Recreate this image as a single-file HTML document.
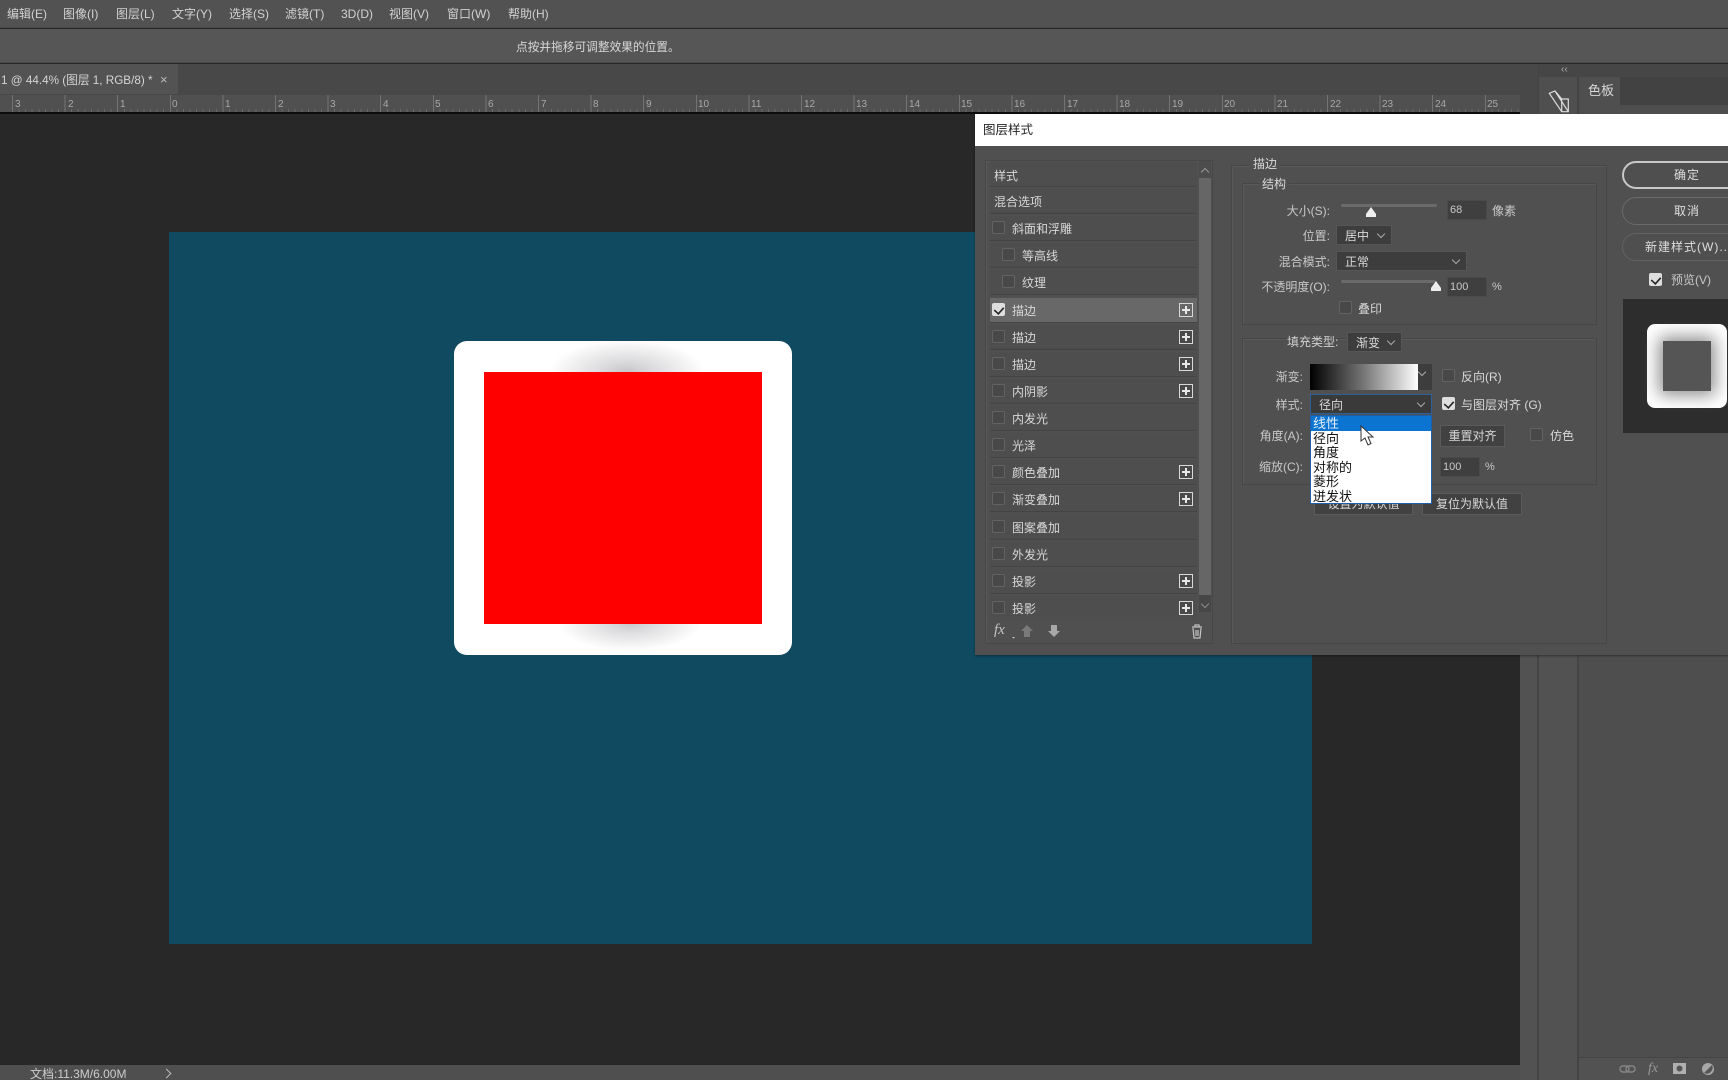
<!DOCTYPE html>
<html lang="zh"><head><meta charset="utf-8"><title>图层样式</title>
<style>
*{box-sizing:border-box}
html,body{margin:0;padding:0;width:1728px;height:1080px;overflow:hidden;background:#282828}
body{position:relative;font-family:"Liberation Sans","Noto Sans CJK SC",sans-serif;font-size:12px;color:#d8d8d8}
div,span.a{position:absolute}
.t{position:absolute;line-height:20px;height:20px;white-space:nowrap}
.r{text-align:right;width:90px;color:#c8c8c8}
.m{font-size:12px;top:4px;color:#d2d2d2}
.l{position:absolute;font-size:10px;color:#a8a8a8;top:98px;line-height:14px}
.row{left:990px;width:207px;height:26px;background:#4e4e4e;border-bottom:1px solid #444;border-top:1px solid #505050}
.row .t{top:3px;left:22px;color:#d8d8d8}
.row.i .t{left:32px}
.cb{width:13px;height:13px;background:#484848;border:1px solid #626262;border-radius:2px}
.row .cb{left:2px;top:5px}
.row.i .cb{left:12px}
.cb.c{background:#dedede;border-color:#dedede}
.cb.c:after{content:"";position:absolute;left:2px;top:0;width:6px;height:9px;border:solid #222;border-width:0 2px 2px 0;transform:rotate(42deg) scale(.8)}
.p{left:189px;top:5px;width:14px;height:14px;border:1px solid #d8d8d8;background:#4a4a4a}
.p:before{content:"";position:absolute;left:2px;top:5px;width:8px;height:2px;background:#e8e8e8}
.p:after{content:"";position:absolute;left:5px;top:2px;width:2px;height:8px;background:#e8e8e8}
.sel{background:#3d3d3d;border:1px solid #565656;color:#d8d8d8;height:20px;line-height:20px;padding-left:8px}
.sel:after{content:"";position:absolute;right:7px;top:5px;width:5px;height:5px;border:solid #aaa;border-width:0 1px 1px 0;transform:rotate(45deg)}
.inp{background:#3f3f3f;border:1px solid #4a4a4a;color:#c8c8c8;font-size:11px;line-height:19px;height:20px;padding-left:2px;width:40px}
.trk{height:3px;background:#6a6a6a;border-radius:2px}
.btn{background:#414141;border:1px solid #5a5a5a;color:#d8d8d8;text-align:center;height:22px;line-height:21px}
.pill{left:1622px;width:130px;height:28px;border-radius:14px;border:1px solid #6a6a6a;background:#4f4f4f;text-align:center;line-height:26px;color:#dedede;letter-spacing:1px}
.grp{border:1px solid #464646;box-shadow:inset 1px 1px 0 #595959}
.leg{background:#505050;padding:0 3px}
.it{left:1px;width:120px;height:14.6px;line-height:15px;font-size:13px;color:#111;padding-left:2px}
</style></head><body>

<!-- menu bar -->
<div style="left:0;top:0;width:1728px;height:28px;background:#525252;border-bottom:1px solid #484848"></div>
<span class="t m" style="left:7px">编辑(E)</span><span class="t m" style="left:63px">图像(I)</span><span class="t m" style="left:116px">图层(L)</span><span class="t m" style="left:172px">文字(Y)</span><span class="t m" style="left:229px">选择(S)</span><span class="t m" style="left:285px">滤镜(T)</span><span class="t m" style="left:341px">3D(D)</span><span class="t m" style="left:389px">视图(V)</span><span class="t m" style="left:447px">窗口(W)</span><span class="t m" style="left:508px">帮助(H)</span>

<!-- options bar -->
<div style="left:0;top:29px;width:1728px;height:34px;background:#565656;border-bottom:1px solid #4a4a4a"></div>
<span class="t" style="left:516px;top:38px;font-size:11.7px;color:#d8d8d8">点按并拖移可调整效果的位置。</span>

<!-- tab bar -->
<div style="left:0;top:64px;width:1538px;height:31px;background:#484848"></div>
<div style="left:0;top:64px;width:178px;height:30px;background:#535353"></div>
<span class="t" style="left:1px;top:71px;font-size:11.7px;color:#d4d4d4">1 @ 44.4% (图层 1, RGB/8) *</span>
<span class="t" style="left:160px;top:70px;font-size:13px;color:#bcbcbc">×</span>

<!-- ruler -->
<div style="left:0;top:95px;width:1520px;height:17px;background-color:#505050;background-image:repeating-linear-gradient(90deg,#737373 0,#737373 1px,transparent 1px,transparent 52.6px),repeating-linear-gradient(90deg,#686868 0,#686868 1px,transparent 1px,transparent 6.575px);background-size:100% 17px,100% 3px;background-position:12.2px 0,12.2px 14px;background-repeat:no-repeat"></div>
<div style="left:0;top:112px;width:1520px;height:2px;background:#0c0c0c"></div>
<span class="l" style="left:15px">3</span><span class="l" style="left:68px">2</span><span class="l" style="left:120px">1</span><span class="l" style="left:172px">0</span><span class="l" style="left:225px">1</span><span class="l" style="left:278px">2</span><span class="l" style="left:330px">3</span><span class="l" style="left:383px">4</span><span class="l" style="left:435px">5</span><span class="l" style="left:488px">6</span><span class="l" style="left:541px">7</span><span class="l" style="left:593px">8</span><span class="l" style="left:646px">9</span><span class="l" style="left:698px">10</span><span class="l" style="left:751px">11</span><span class="l" style="left:804px">12</span><span class="l" style="left:856px">13</span><span class="l" style="left:909px">14</span><span class="l" style="left:961px">15</span><span class="l" style="left:1014px">16</span><span class="l" style="left:1067px">17</span><span class="l" style="left:1119px">18</span><span class="l" style="left:1172px">19</span><span class="l" style="left:1224px">20</span><span class="l" style="left:1277px">21</span><span class="l" style="left:1330px">22</span><span class="l" style="left:1382px">23</span><span class="l" style="left:1435px">24</span><span class="l" style="left:1487px">25</span>

<!-- document -->
<div style="left:169px;top:232px;width:1143px;height:712px;background:#0f4a61"></div>
<div style="left:454px;top:341px;width:338px;height:314px;border-radius:13px;background:radial-gradient(ellipse 78px 32px at 173px 31px,#c6c6c8 0,#dcdcde 35%,rgba(255,255,255,0) 100%),radial-gradient(ellipse 72px 28px at 176px 282px,#c8c8ca 0,#dedee0 35%,rgba(255,255,255,0) 100%),#fff"></div>
<div style="left:484px;top:372px;width:278px;height:252px;background:#f00"></div>

<!-- right dock -->
<div style="left:1520px;top:64px;width:208px;height:1016px;background:#525252"></div>
<div style="left:1537px;top:64px;width:2px;height:1016px;background:#444"></div>
<div style="left:1577px;top:64px;width:2px;height:1016px;background:#444"></div>
<div style="left:1579px;top:64px;width:149px;height:1016px;background:#4e4e4e"></div>
<div style="left:1579px;top:1057px;width:149px;height:23px;background:#525252;border-top:1px solid #444"></div>
<div style="left:1520px;top:64px;width:18px;height:50px;background:#484848"></div>
<div style="left:1539px;top:64px;width:189px;height:13px;background:#464646"></div>
<span class="t" style="left:1561px;top:60px;font-size:10px;color:#b0b0b0">‹‹</span>
<div style="left:1539px;top:77px;width:38px;height:37px;background:#4f4f4f"></div>
<svg style="position:absolute;left:1546px;top:88px" width="28" height="26" viewBox="0 0 28 26"><path d="M3.3 5.3 L9 3 L15.7 11 L22.3 11 L22.3 23.7 L15.7 23.7 Z M9 3 L22.3 23.7 M15.7 11 L15.7 23.7" fill="none" stroke="#dcdcdc" stroke-width="1.2"/></svg>
<div style="left:1620px;top:77px;width:108px;height:28px;background:#424242"></div>
<div style="left:1582px;top:77px;width:38px;height:37px;background:#4f4f4f"></div>
<span class="t" style="left:1588px;top:81px;font-size:13px;color:#d8d8d8">色板</span>

<!-- footer icons -->
<svg style="position:absolute;left:1618px;top:1061px" width="105" height="16" viewBox="0 0 105 16">
<rect x="2" y="5" width="9" height="6" rx="3" fill="none" stroke="#868686" stroke-width="1.4"/><rect x="8" y="5" width="9" height="6" rx="3" fill="none" stroke="#868686" stroke-width="1.4"/>
<rect x="55" y="2" width="13" height="11" fill="#b0b0b0"/><circle cx="61.5" cy="7.5" r="3" fill="#555"/>
<circle cx="90" cy="8" r="6" fill="#a8a8a8"/><path d="M86 12 L94 4 A6 6 0 0 1 86 12Z" fill="#555"/></svg>
<span class="t" style="left:1648px;top:1059px;font-family:'Liberation Serif',serif;font-style:italic;font-size:14px;color:#989898">fx</span>

<!-- status bar -->
<div style="left:0;top:1065px;width:1520px;height:15px;background:#4f4f4f"></div>
<span class="t" style="left:30px;top:1064px;font-size:12px;color:#cccccc">文档:11.3M/6.00M</span>
<div style="left:163px;top:1070px;width:7px;height:7px;border:solid #bbb;border-width:1px 1px 0 0;transform:rotate(45deg)"></div>

<!-- dialog -->
<div style="left:975px;top:114px;width:753px;height:541px;background:#505050;box-shadow:0 1px 2px rgba(0,0,0,.4)"></div>
<div style="left:975px;top:114px;width:753px;height:32px;background:#fff"></div>
<span class="t" style="left:983px;top:120px;color:#222;font-size:12.5px">图层样式</span>

<!-- style list -->
<div class="grp" style="left:985px;top:160px;width:228px;height:484px;border-color:#474747"></div>
<div class="row" style="top:161px"><span class="t" style="left:4px;top:4px">样式</span></div>
<div class="row" style="top:188px"><span class="t" style="left:4px">混合选项</span></div>
<div class="row" style="top:215px"><div class="cb"></div><span class="t">斜面和浮雕</span></div>
<div class="row i" style="top:242px"><div class="cb"></div><span class="t">等高线</span></div>
<div class="row i" style="top:269px"><div class="cb"></div><span class="t">纹理</span></div>
<div class="row" style="top:297px;background:#686868"><div class="cb c"></div><span class="t">描边</span><div class="p" style="background:#686868"></div></div>
<div class="row" style="top:324px"><div class="cb"></div><span class="t">描边</span><div class="p"></div></div>
<div class="row" style="top:351px"><div class="cb"></div><span class="t">描边</span><div class="p"></div></div>
<div class="row" style="top:378px"><div class="cb"></div><span class="t">内阴影</span><div class="p"></div></div>
<div class="row" style="top:405px"><div class="cb"></div><span class="t">内发光</span></div>
<div class="row" style="top:432px"><div class="cb"></div><span class="t">光泽</span></div>
<div class="row" style="top:459px"><div class="cb"></div><span class="t">颜色叠加</span><div class="p"></div></div>
<div class="row" style="top:486px"><div class="cb"></div><span class="t">渐变叠加</span><div class="p"></div></div>
<div class="row" style="top:514px"><div class="cb"></div><span class="t">图案叠加</span></div>
<div class="row" style="top:541px"><div class="cb"></div><span class="t">外发光</span></div>
<div class="row" style="top:568px"><div class="cb"></div><span class="t">投影</span><div class="p"></div></div>
<div class="row" style="top:595px;height:24px;border-bottom:0"><div class="cb"></div><span class="t">投影</span><div class="p"></div></div>
<!-- scrollbar -->
<div style="left:1199px;top:161px;width:12px;height:434px;background:#666"></div>
<div style="left:1199px;top:161px;width:12px;height:17px;background:#4c4c4c"></div>
<div style="left:1202px;top:169px;width:6px;height:6px;border:solid #9a9a9a;border-width:1px 0 0 1px;transform:rotate(45deg)"></div>
<div style="left:1199px;top:595px;width:12px;height:17px;background:#474747"></div>
<div style="left:1202px;top:601px;width:6px;height:6px;border:solid #8a8a8a;border-width:0 1px 1px 0;transform:rotate(45deg)"></div>
<!-- list toolbar -->
<div style="left:987px;top:619px;width:224px;height:22px;background:#505050"></div>
<span class="t" style="left:994px;top:620px;font-family:'Liberation Serif',serif;font-style:italic;font-size:15px;color:#c4c4c4">fx</span>
<svg style="position:absolute;left:1006px;top:620px" width="200" height="22" viewBox="0 0 200 22">
<path d="M3 18 L9 18 L6 21Z" fill="#ccc" transform="translate(3,-1) scale(.5) translate(3,18)"/>
<path d="M21 6 L27 0 L33 6 L30 6 L30 12 L24 12 L24 6Z" transform="translate(-6,5)" fill="#7a7a7a"/>
<path d="M45 6 L45 0 L51 0 L51 6 L54 6 L48 12 L42 6Z" transform="translate(0,5)" fill="#a8a8a8"/>
<path d="M186 7 L196 7 M189 7 L189 5 L193 5 L193 7 M187 8 L188 18 L194 18 L195 8 M190 10 L190 16 M192 10 L192 16" fill="none" stroke="#c4c4c4" stroke-width="1.2"/>
</svg>

<!-- stroke group -->
<div class="grp" style="left:1231px;top:165px;width:376px;height:479px"></div>
<span class="t leg" style="left:1250px;top:154px">描边</span>
<div class="grp" style="left:1242px;top:183px;width:355px;height:142px"></div>
<span class="t leg" style="left:1259px;top:174px">结构</span>
<span class="t r" style="left:1240px;top:201px">大小(S):</span>
<div class="trk" style="left:1341px;top:204px;width:96px"></div>
<svg style="position:absolute;left:1365px;top:207px" width="12" height="11"><path d="M6 0 L11 7 L11 10 L1 10 L1 7Z" fill="#eee"/></svg>
<div class="inp" style="left:1447px;top:200px">68</div>
<span class="t" style="left:1492px;top:201px;color:#c8c8c8">像素</span>
<span class="t r" style="left:1240px;top:226px">位置:</span>
<div class="sel" style="left:1336px;top:225px;width:56px">居中</div>
<span class="t r" style="left:1240px;top:252px">混合模式:</span>
<div class="sel" style="left:1336px;top:251px;width:131px">正常</div>
<span class="t r" style="left:1240px;top:277px">不透明度(O):</span>
<div class="trk" style="left:1341px;top:280px;width:95px"></div>
<svg style="position:absolute;left:1430px;top:281px" width="12" height="11"><path d="M6 0 L11 7 L11 10 L1 10 L1 7Z" fill="#eee"/></svg>
<div class="inp" style="left:1447px;top:277px">100</div>
<span class="t" style="left:1492px;top:277px;font-size:11px;color:#c8c8c8">%</span>
<div class="cb" style="left:1339px;top:301px"></div>
<span class="t" style="left:1358px;top:299px">叠印</span>

<div class="grp" style="left:1242px;top:338px;width:355px;height:147px"></div>
<span class="t" style="left:1287px;top:332px;color:#d0d0d0">填充类型:</span>
<div class="sel" style="left:1347px;top:332px;width:55px">渐变</div>
<span class="t r" style="left:1213px;top:367px">渐变:</span>
<div style="left:1310px;top:364px;width:108px;height:26px;background:linear-gradient(90deg,#000,#777 50%,#fff)"></div>
<div class="sel" style="left:1418px;top:364px;width:14px;height:26px;padding:0;border:0"></div>
<div class="cb" style="left:1442px;top:369px"></div>
<span class="t" style="left:1461px;top:367px">反向(R)</span>
<span class="t r" style="left:1213px;top:395px">样式:</span>
<div class="sel" style="left:1310px;top:394px;width:122px;border:1px solid #2f5f9a;padding-left:8px;background:#3a3a3a">径向</div>
<div class="cb c" style="left:1442px;top:397px"></div>
<span class="t" style="left:1461px;top:395px">与图层对齐 (G)</span>
<span class="t r" style="left:1213px;top:426px">角度(A):</span>
<div class="btn" style="left:1440px;top:425px;width:65px">重置对齐</div>
<div class="cb" style="left:1530px;top:428px"></div>
<span class="t" style="left:1550px;top:426px">仿色</span>
<span class="t r" style="left:1213px;top:457px">缩放(C):</span>
<div class="inp" style="left:1440px;top:457px">100</div>
<span class="t" style="left:1485px;top:457px;font-size:11px;color:#c8c8c8">%</span>
<div class="btn" style="left:1314px;top:493px;width:99px">设置为默认值</div>
<div class="btn" style="left:1422px;top:493px;width:100px">复位为默认值</div>

<!-- popup -->
<div style="left:1310px;top:415px;width:122px;height:89px;background:#fff;border:1px solid #1f5fa8"></div>
<div class="it" style="left:1311px;top:416px;background:#0a74d0;color:#e6f0fa">线性</div>
<div class="it" style="left:1311px;top:431px">径向</div>
<div class="it" style="left:1311px;top:445px">角度</div>
<div class="it" style="left:1311px;top:460px">对称的</div>
<div class="it" style="left:1311px;top:474px">菱形</div>
<div class="it" style="left:1311px;top:489px">迸发状</div>
<svg style="position:absolute;left:1359px;top:425px" width="16" height="22" viewBox="0 0 16 22"><path d="M2 1 L2 16 L6 13 L9 20 L12 18.5 L9 12 L14 12Z" fill="#fff" stroke="#333" stroke-width="1"/></svg>

<!-- right buttons -->
<div class="pill" style="top:161px;border:2px solid #c8c8c8;line-height:24px">确定</div>
<div class="pill" style="top:197px">取消</div>
<div class="pill" style="top:233px;padding-left:22px;text-align:left;border-color:#626262;white-space:nowrap">新建样式(W)...</div>
<div class="cb c" style="left:1649px;top:273px"></div>
<span class="t" style="left:1671px;top:270px;color:#c8c8c8">预览(V)</span>
<div style="left:1623px;top:299px;width:105px;height:134px;background:#2d2d2d"></div>
<div style="left:1647px;top:324px;width:80px;height:84px;background:#fff;border-radius:8px"></div>
<div style="left:1663px;top:341px;width:48px;height:50px;background:#555;box-shadow:0 0 16px 4px #8c8c8c"></div>

</body></html>
